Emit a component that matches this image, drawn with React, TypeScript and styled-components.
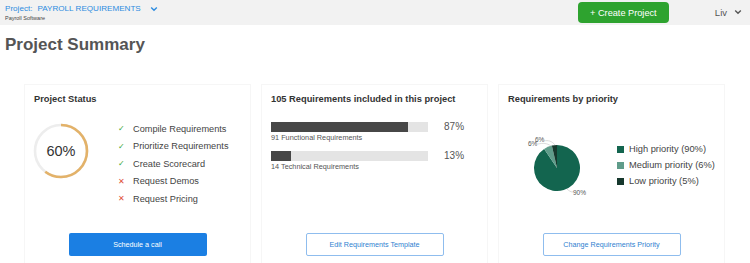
import styled, { createGlobalStyle } from 'styled-components';

const GlobalStyle = createGlobalStyle`
  html, body {
    margin: 0;
    padding: 0;
    background: #ffffff;
    font-family: 'Liberation Sans', Arial, sans-serif;
    overflow: hidden;
  }
  * { box-sizing: border-box; }
`;

const steps = [
  { label: 'Compile Requirements', done: true },
  { label: 'Prioritize Requirements', done: true },
  { label: 'Create Scorecard', done: true },
  { label: 'Request Demos', done: false },
  { label: 'Request Pricing', done: false },
];

const bars = [
  { label: '91 Functional Requirements', value: 87 },
  { label: '14 Technical Requirements', value: 13 },
];

const legend = [
  { label: 'High priority (90%)', color: '#13654f' },
  { label: 'Medium priority (6%)', color: '#5f9c8a' },
  { label: 'Low priority (5%)', color: '#16382d' },
];

function Chevron({ color }: { color: string }) {
  return (
    <svg width="8" height="6" viewBox="0 0 8 6">
      <path d="M1.2 1.5 L4 4.3 L6.8 1.5" fill="none" stroke={color} strokeWidth="1.4" />
    </svg>
  );
}

function ProgressRing({ value }: { value: number }) {
  const r = 26;
  const c = 2 * Math.PI * r;
  return (
    <RingWrap>
      <svg width="56" height="56" viewBox="0 0 56 56">
        <circle cx="28" cy="28" r={r} fill="none" stroke="#ededed" strokeWidth="2.6" />
        <circle
          cx="28"
          cy="28"
          r={r}
          fill="none"
          stroke="#e3b269"
          strokeWidth="2.6"
          strokeDasharray={`${(c * value) / 100} ${c}`}
          transform="rotate(-90 28 28)"
        />
      </svg>
      <RingLabel>{value}%</RingLabel>
    </RingWrap>
  );
}

function polar(cx: number, cy: number, r: number, deg: number) {
  const a = ((deg - 90) * Math.PI) / 180;
  return [cx + r * Math.cos(a), cy + r * Math.sin(a)];
}

function slice(cx: number, cy: number, r: number, from: number, to: number) {
  const [x1, y1] = polar(cx, cy, r, from);
  const [x2, y2] = polar(cx, cy, r, to);
  const large = to - from > 180 ? 1 : 0;
  return `M${cx} ${cy} L${x1} ${y1} A${r} ${r} 0 ${large} 1 ${x2} ${y2} Z`;
}

function PieChart() {
  const cx = 38;
  const cy = 38;
  const r = 23;
  return (
    <PieSvg width="80" height="70" viewBox="0 0 80 70">
      <path d={slice(cx, cy, r, 0, 326)} fill="#13654f" />
      <path d={slice(cx, cy, r, 326, 347)} fill="#5f9c8a" />
      <path d={slice(cx, cy, r, 347, 360)} fill="#16382d" />
      <path d="M32 16 C28 13 24 13 19 14" fill="none" stroke="#d2d2d2" strokeWidth="0.8" />
      <path d="M36 15 C33 11 29 10 25 11" fill="none" stroke="#d2d2d2" strokeWidth="0.8" />
      <path d="M48 59 C50 61 52 62 54 62" fill="none" stroke="#d2d2d2" strokeWidth="0.8" />
      <PieText x="9" y="16">6%</PieText>
      <PieText x="16" y="12">6%</PieText>
      <PieText x="54" y="65">90%</PieText>
    </PieSvg>
  );
}

export default function App() {
  return (
    <Page>
      <GlobalStyle />
      <Header>
        <ProjectBlock>
          <ProjectLine>
            <span>Project:</span>
            <span>PAYROLL REQUIREMENTS</span>
            <ChevronSlot>
              <Chevron color="#2d8ce0" />
            </ChevronSlot>
          </ProjectLine>
          <SubTitle>Payroll Software</SubTitle>
        </ProjectBlock>
        <CreateButton>+ Create Project</CreateButton>
        <UserMenu>
          Liv
          <Chevron color="#555" />
        </UserMenu>
      </Header>
      <PageTitle>Project Summary</PageTitle>
      <Cards>
        <Card>
          <CardTitle>Project Status</CardTitle>
          <StatusBody>
            <ProgressRing value={60} />
            <StepList>
              {steps.map((s) => (
                <Step key={s.label}>
                  <StepIcon done={s.done}>{s.done ? '✓' : '✕'}</StepIcon>
                  {s.label}
                </Step>
              ))}
            </StepList>
          </StatusBody>
          <Footer>
            <PrimaryButton>Schedule a call</PrimaryButton>
          </Footer>
        </Card>
        <Card>
          <CardTitle>105 Requirements included in this project</CardTitle>
          <BarList>
            {bars.map((b) => (
              <BarRow key={b.label}>
                <BarCol>
                  <BarTrack>
                    <BarFill style={{ width: `${b.value}%` }} />
                  </BarTrack>
                  <BarLabel>{b.label}</BarLabel>
                </BarCol>
                <BarValue>{b.value}%</BarValue>
              </BarRow>
            ))}
          </BarList>
          <Footer>
            <OutlineButton>Edit Requirements Template</OutlineButton>
          </Footer>
        </Card>
        <Card>
          <CardTitle>Requirements by priority</CardTitle>
          <PriorityBody>
            <PieChart />
            <Legend>
              {legend.map((l) => (
                <LegendItem key={l.label}>
                  <Swatch color={l.color} />
                  {l.label}
                </LegendItem>
              ))}
            </Legend>
          </PriorityBody>
          <Footer>
            <OutlineButton>Change Requirements Priority</OutlineButton>
          </Footer>
        </Card>
      </Cards>
    </Page>
  );
}

const Page = styled.div`
  width: 750px;
  height: 263px;
  overflow: hidden;
`;

const Header = styled.div`
  height: 25px;
  background: #f2f2f2;
  display: flex;
  align-items: flex-start;
  padding: 0 8px 0 5px;
`;

const ProjectBlock = styled.div`
  display: flex;
  flex-direction: column;
  padding-top: 3px;
  flex: 1;
`;

const ProjectLine = styled.div`
  display: flex;
  align-items: center;
  gap: 5px;
  color: #2d8ce0;
  font-size: 8.1px;
  line-height: 11px;
`;

const ChevronSlot = styled.span`
  display: flex;
  margin-left: 4px;
`;

const SubTitle = styled.div`
  font-size: 5.5px;
  color: #444;
  line-height: 8px;
`;

const CreateButton = styled.div`
  margin-top: 2px;
  width: 91px;
  height: 21px;
  border-radius: 4px;
  background: #2ea32f;
  color: #fff;
  font-size: 9.2px;
  display: flex;
  align-items: center;
  justify-content: center;
  margin-right: 46px;
`;

const UserMenu = styled.div`
  display: flex;
  align-items: center;
  gap: 7px;
  height: 24px;
  color: #555;
  font-size: 9.5px;
`;

const PageTitle = styled.h1`
  margin: 10px 0 0 5px;
  font-size: 17px;
  line-height: 20px;
  font-weight: bold;
  color: #555;
`;

const Cards = styled.div`
  display: flex;
  gap: 10px;
  padding: 0 0 0 24px;
  margin-top: 29px;
`;

const Card = styled.div`
  width: 227px;
  height: 190px;
  border: 1px solid #f6f6f6;
  display: flex;
  flex-direction: column;
  padding: 8px 0 0 9px;
`;

const CardTitle = styled.div`
  font-size: 9.3px;
  font-weight: bold;
  color: #333;
  line-height: 13px;
`;

const StatusBody = styled.div`
  display: flex;
  align-items: flex-start;
  margin-top: 16px;
  height: 100px;
`;

const RingWrap = styled.div`
  position: relative;
  width: 56px;
  height: 56px;
  margin-top: 1px;
  margin-left: -1px;
`;

const RingLabel = styled.div`
  position: absolute;
  inset: 0;
  display: flex;
  align-items: center;
  justify-content: center;
  font-size: 14.5px;
  color: #333;
`;

const StepList = styled.div`
  display: flex;
  flex-direction: column;
  margin-left: 29px;
  margin-top: -2px;
`;

const Step = styled.div`
  display: flex;
  align-items: center;
  height: 17.5px;
  font-size: 9.2px;
  color: #444;
  white-space: nowrap;
`;

const StepIcon = styled.span<{ done: boolean }>`
  width: 15px;
  font-size: 8px;
  color: ${(p) => (p.done ? '#3aa83a' : '#e0503a')};
`;

const Footer = styled.div`
  margin-top: auto;
  margin-bottom: 17px;
  display: flex;
  justify-content: center;
  padding-right: 9px;
`;

const PrimaryButton = styled.div`
  width: 138px;
  height: 23px;
  border-radius: 2px;
  background: #1b7fe3;
  color: #fff;
  font-size: 7.2px;
  display: flex;
  align-items: center;
  justify-content: center;
`;

const OutlineButton = styled(PrimaryButton)`
  background: #fff;
  border: 1px solid #8fbdee;
  color: #2f7fd0;
`;

const BarList = styled.div`
  display: flex;
  flex-direction: column;
  gap: 8px;
  margin-top: 16px;
  height: 100px;
`;

const BarRow = styled.div`
  display: flex;
  align-items: flex-start;
`;

const BarCol = styled.div`
  display: flex;
  flex-direction: column;
  width: 157px;
`;

const BarTrack = styled.div`
  height: 10px;
  background: #e4e4e4;
`;

const BarFill = styled.div`
  height: 100%;
  background: #474747;
`;

const BarLabel = styled.div`
  font-size: 7.3px;
  color: #555;
  line-height: 11px;
`;

const BarValue = styled.div`
  margin-left: 16px;
  font-size: 10px;
  color: #555;
  line-height: 10px;
`;

const PriorityBody = styled.div`
  display: flex;
  align-items: flex-start;
  margin-top: 24px;
  height: 100px;
`;

const PieSvg = styled.svg`
  margin-left: 11px;
  flex-shrink: 0;
`;

const PieText = styled.text`
  font-size: 6.5px;
  fill: #555;
  font-family: 'Liberation Sans', Arial, sans-serif;
`;

const Legend = styled.div`
  display: flex;
  flex-direction: column;
  gap: 5px;
  margin-top: 14px;
  margin-left: 18px;
`;

const LegendItem = styled.div`
  display: flex;
  align-items: center;
  gap: 5px;
  font-size: 9.3px;
  color: #444;
  line-height: 11px;
`;

const Swatch = styled.span<{ color: string }>`
  width: 7px;
  height: 7px;
  background: ${(p) => p.color};
`;
